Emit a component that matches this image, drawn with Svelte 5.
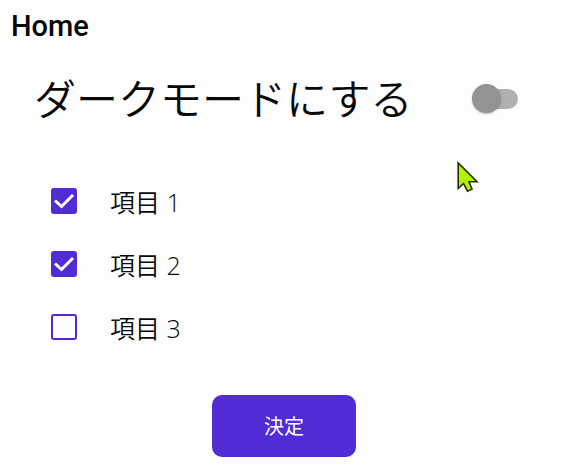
<script>
  let darkMode = $state(false);
  let items = $state([
    { id: 1, label: '項目 1', checked: true },
    { id: 2, label: '項目 2', checked: true },
    { id: 3, label: '項目 3', checked: false }
  ]);
</script>

<div class="page">
  <header class="bar">
    <h1>Home</h1>
  </header>

  <main>
    <div class="mode-row">
      <label class="mode-label" for="dark-mode">ダークモードにする</label>
      <input id="dark-mode" class="switch" type="checkbox" role="switch" bind:checked={darkMode} />
    </div>

    <ul class="items">
      {#each items as item (item.id)}
        <li>
          <label class="item">
            <span class="box">
              <input type="checkbox" bind:checked={item.checked} />
              {#if item.checked}
                <svg viewBox="0 0 26 26" aria-hidden="true"><path d="M4 12.5 10.5 18.5 22 7" /></svg>
              {/if}
            </span>
            <span class="item-text">{item.label}</span>
          </label>
        </li>
      {/each}
    </ul>

    <button class="submit" type="button">決定</button>
  </main>

  <svg class="pointer" viewBox="0 0 22 32" aria-hidden="true">
    <path d="M1.2 2V27.5L6.5 22.5 10.5 30.2 15 28.2 12 20.8H20Z" />
  </svg>
</div>

<style>
  :global(body) { margin: 0; background: #fdfdfd; }
  .page {
    position: relative;
    color: #080808;
    font-family: 'Open Sans', 'Noto Sans CJK JP', sans-serif;
  }
  .bar { padding: 8px 11px; }
  h1 {
    margin: 0;
    font: 500 29px/36px Roboto, sans-serif;
  }
  main {
    display: flex;
    flex-direction: column;
    padding: 16px 54px 10px 34px;
  }
  .mode-row {
    display: flex;
    align-items: center;
    justify-content: space-between;
  }
  .mode-label {
    font-size: 42px;
    font-weight: 350;
    line-height: 62px;
    white-space: nowrap;
  }
  .switch {
    appearance: none;
    position: relative;
    width: 46px; height: 30px;
    margin: 0;
    flex-shrink: 0;
    cursor: pointer;
  }
  .switch::before {
    content: '';
    position: absolute;
    inset: 5px 0 5px 6px;
    border-radius: 10px;
    background: #b0b0b0;
  }
  .switch::after {
    content: '';
    position: absolute;
    top: 0; left: 0;
    width: 29px; height: 29px;
    border-radius: 50%;
    background: #939393;
    box-shadow: 0 1px 2px rgba(0,0,0,0.25);
  }
  .switch:checked::before { background: #a796e8; }
  .switch:checked::after { left: 17px; background: #512bd4; }
  .items {
    display: flex;
    flex-direction: column;
    gap: 25px;
    margin: 0;
    padding: 52px 17px 0;
    list-style: none;
  }
  .item {
    display: flex;
    align-items: center;
    gap: 33px;
    font-size: 25px;
    font-weight: 350;
    line-height: 36px;
    cursor: pointer;
  }
  .item-text { padding-top: 2px; }
  .box { position: relative; display: flex; }
  .box input {
    appearance: none;
    box-sizing: border-box;
    width: 26px; height: 26px;
    margin: 0;
    border: 2px solid #512bd4;
    border-radius: 3px;
  }
  .box input:checked { background: #512bd4; }
  .box svg {
    position: absolute;
    inset: 0;
    fill: none; stroke: #fff; stroke-width: 3;
    pointer-events: none;
  }
  .submit {
    align-self: center;
    margin: 49px 0 0 16px;
    padding: 16px 52px;
    border: none;
    border-radius: 10px;
    background: #512bd4;
    color: #fff;
    font: 400 20px/30px 'Noto Sans CJK JP', sans-serif;
    cursor: pointer;
  }
  .pointer {
    position: absolute;
    top: 161px; left: 457px;
    width: 22px; height: 32px;
    fill: #b4f000; stroke: #223000; stroke-width: 1.6;
    pointer-events: none;
  }
</style>
